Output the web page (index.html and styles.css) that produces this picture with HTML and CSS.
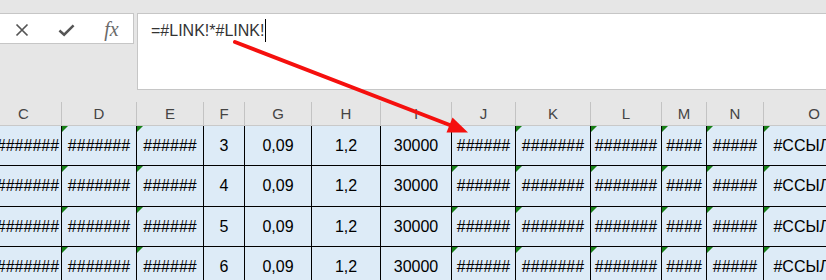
FILE: index.html
```html
<!DOCTYPE html>
<html>
<head>
    <title>Formula bar - #LINK!</title>
    <link rel="stylesheet" href="styles.css">
</head>
<body>
    <div class="formula-bar">
        <div class="fx-buttons">
            <span class="btn">
                <svg width="16" height="16" viewBox="0 0 16 16"><path d="M2.5 2.5 L13.5 13.5 M13.5 2.5 L2.5 13.5" stroke="#555" stroke-width="1.7" fill="none"/></svg>
            </span>
            <span class="btn">
                <svg width="18" height="16" viewBox="0 0 18 16"><path d="M1.5 8.5 L6.5 13 L16.5 3" stroke="#555" stroke-width="2.6" fill="none"/></svg>
            </span>
            <span class="btn fx">fx</span>
        </div>
        <div class="formula-input">
            <span class="formula-text">=#LINK!*#LINK!</span><span class="caret"></span>
        </div>
    </div>

    <div class="sheet">
        <div class="grid">
            <div class="col-head">C</div>
            <div class="col-head">D</div>
            <div class="col-head">E</div>
            <div class="col-head">F</div>
            <div class="col-head">G</div>
            <div class="col-head">H</div>
            <div class="col-head">I</div>
            <div class="col-head">J</div>
            <div class="col-head">K</div>
            <div class="col-head">L</div>
            <div class="col-head">M</div>
            <div class="col-head">N</div>
            <div class="col-head">O</div>

            <!-- row 1 -->
            <div class="cell">########</div>
            <div class="cell flag">#######</div>
            <div class="cell flag">######</div>
            <div class="cell">3</div>
            <div class="cell">0,09</div>
            <div class="cell">1,2</div>
            <div class="cell">30000</div>
            <div class="cell flag">######</div>
            <div class="cell flag">#######</div>
            <div class="cell flag">#######</div>
            <div class="cell flag">####</div>
            <div class="cell flag">#####</div>
            <div class="cell flag">#ССЫЛКА!</div>

            <!-- row 2 -->
            <div class="cell">########</div>
            <div class="cell flag">#######</div>
            <div class="cell flag">######</div>
            <div class="cell">4</div>
            <div class="cell">0,09</div>
            <div class="cell">1,2</div>
            <div class="cell">30000</div>
            <div class="cell flag">######</div>
            <div class="cell flag">#######</div>
            <div class="cell flag">#######</div>
            <div class="cell flag">####</div>
            <div class="cell flag">#####</div>
            <div class="cell flag">#ССЫЛКА!</div>

            <!-- row 3 -->
            <div class="cell">########</div>
            <div class="cell flag">#######</div>
            <div class="cell flag">######</div>
            <div class="cell">5</div>
            <div class="cell">0,09</div>
            <div class="cell">1,2</div>
            <div class="cell">30000</div>
            <div class="cell flag">######</div>
            <div class="cell flag">#######</div>
            <div class="cell flag">#######</div>
            <div class="cell flag">####</div>
            <div class="cell flag">#####</div>
            <div class="cell flag">#ССЫЛКА!</div>

            <!-- row 4 -->
            <div class="cell">########</div>
            <div class="cell flag">#######</div>
            <div class="cell flag">######</div>
            <div class="cell">6</div>
            <div class="cell">0,09</div>
            <div class="cell">1,2</div>
            <div class="cell">30000</div>
            <div class="cell flag">######</div>
            <div class="cell flag">#######</div>
            <div class="cell flag">#######</div>
            <div class="cell flag">####</div>
            <div class="cell flag">#####</div>
            <div class="cell flag">#ССЫЛКА!</div>
        </div>
    </div>

    <!-- red annotation arrow over the screenshot -->
    <svg class="arrow" width="826" height="280" viewBox="0 0 826 280">
        <line x1="235" y1="42" x2="451" y2="125.5" stroke="#f5100e" stroke-width="4" stroke-linecap="round"/>
        <polygon points="468,132.5 446.5,132.5 452.5,117.5" fill="#f5100e"/>
    </svg>
</body>
</html>
```

FILE: styles.css
```css
body { margin: 0; background: #e6e6e6; font-family: "Liberation Sans", Arial, sans-serif; overflow: hidden; width: 826px; height: 280px; }

.formula-bar { display: flex; align-items: flex-start; gap: 3px; padding-top: 13px; }
.fx-buttons { display: flex; align-items: center; gap: 28px; width: 120px; height: 27px; margin-left: -1px; padding: 2px 0 0 13px; background: #fff; border: 1px solid #c6c6c6; box-sizing: content-box; }
.fx-buttons .btn { display: flex; align-items: center; justify-content: center; width: 17px; height: 16px; }
.fx-buttons .fx { font-family: "Liberation Serif", serif; font-style: italic; font-size: 20px; color: #6a6a6a; }
.formula-input { flex: 1; height: 70px; padding: 5px 0 0 13px; background: #fff; border: 1px solid #c6c6c6; border-right: none; font-size: 16px; line-height: 20px; color: #333; }
.caret { display: inline-block; height: 23px; border-left: 1px solid #000; vertical-align: -6px; margin-left: 1px; }

.sheet { margin-top: 12px; }
.grid { display: grid; grid-template-columns: 76px 75px 67px 41px 67px 69px 71px 64px 75px 71px 45px 57px 101px; grid-template-rows: 24px 40px 41px 40px 40px; margin-left: -14px; width: max-content; }
.col-head { display: flex; align-items: center; justify-content: center; border-right: 1px solid #c3c3c3; border-bottom: 1px solid #c9c9c9; font-size: 15px; color: #444; }
.cell { position: relative; display: flex; align-items: center; justify-content: center; background: #ddebf7; border-right: 1px solid #000; border-bottom: 1px solid #000; font-size: 16px; color: #000; white-space: nowrap; overflow: hidden; }
.flag::before { content: ""; position: absolute; top: 0; left: 0; border-top: 6px solid #178017; border-right: 6px solid transparent; }

.arrow { position: absolute; top: 0; left: 0; pointer-events: none; }
```
